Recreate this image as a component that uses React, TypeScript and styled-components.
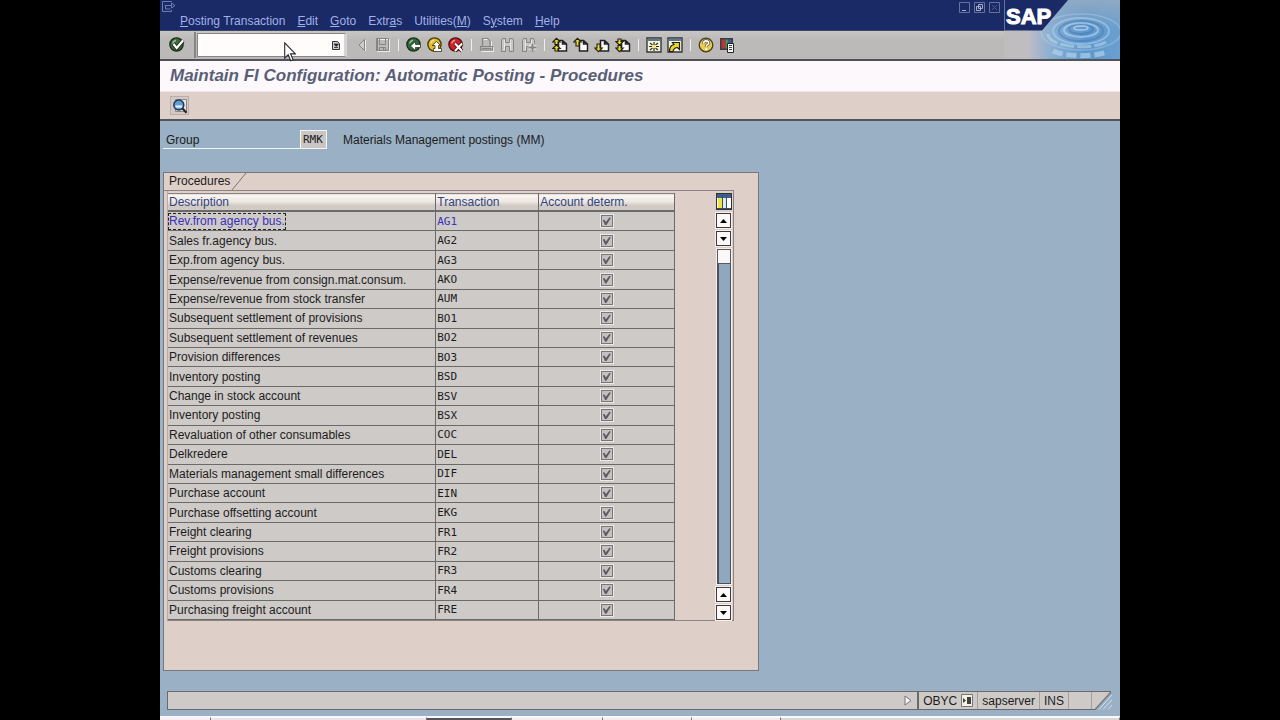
import React from "react";
import styled, { createGlobalStyle } from "styled-components";

const navy = "#192a66";
const grey = "#bfbdbc";
const beige = "#decfc8";
const blue = "#99b0c5";
const cell = "#cecac8";
const line = "#6b6a6a";
const sans = `"Liberation Sans", Arial, sans-serif`;
const mono = `"DejaVu Sans Mono", "Liberation Mono", monospace`;

const GlobalStyle = createGlobalStyle`
  * { box-sizing: border-box; }
  body { margin: 0; background: #000; font: 12px/16px ${sans}; color: #1c1c20; }
  button, input { font: inherit; color: inherit; }
`;

const Stage = styled.div`
  min-height: 100vh;
  padding: 0 12.5%;
  background: #000;
`;

const Window = styled.div`
  display: flex;
  flex-direction: column;
  min-height: 100vh;
  background: ${blue};
`;

/* ---------- header ---------- */

const Header = styled.header`
  display: flex;
  border-bottom: 2px solid #53525a;
  background: ${grey};
`;

const HeaderMain = styled.div`
  flex: 1;
  min-width: 0;
`;

const TitleRow = styled.div`
  display: flex;
  justify-content: space-between;
  height: 13px;
  padding: 1px 4px 0 2px;
  background: ${navy};
`;

const WindowButtons = styled.div`
  display: flex;
  gap: 4px;
`;

const PlainButton = styled.button`
  display: flex;
  align-items: center;
  justify-content: center;
  padding: 0;
  border: 0;
  background: none;
`;

const MenuBar = styled.nav`
  display: flex;
  gap: 12px;
  height: 18px;
  padding: 0 20px 1px;
  background: ${navy};
  border-bottom: 1px solid #3c4566;
`;

const MenuItem = styled.button`
  padding: 0;
  border: 0;
  background: none;
  color: #a3b1e6;
  line-height: 15px;
  white-space: nowrap;
`;

const Toolbar = styled.div`
  display: flex;
  align-items: center;
  height: 28px;
  background: linear-gradient(#c9c7c6, #bcbab9 30%, #bcbab9);
`;

const EnterSlot = styled.div`
  display: flex;
  justify-content: center;
  align-items: center;
  width: 36px;
  height: 26px;
  border-right: 2px solid #858486;
`;

const CommandField = styled.div`
  position: relative;
  display: flex;
  align-items: center;
  width: 150px;
  height: 24px;
  margin-left: 1px;
  padding-right: 3px;
  border: 1px solid #858486;
  border-right: 3px solid #d6d4d4;
  background: #fffcfb;
`;

const CommandInput = styled.input`
  flex: 1;
  min-width: 0;
  height: 20px;
  border: 0;
  padding: 0 4px;
  background: transparent;
  outline: 0;
`;

const Pointer = styled.svg`
  position: absolute;
  left: 86px;
  top: 8px;
`;

const Tools = styled.div`
  display: flex;
  align-items: center;
  margin-left: 6px;
`;

const ToolGroup = styled.div`
  display: flex;
  gap: 3px;
`;

const ToolButton = styled(PlainButton)`
  width: 18px;
  height: 18px;
`;

const Divider = styled.span`
  width: 1px;
  height: 12px;
  margin: 0 6px;
  background: #efeded;
`;

const Brand = styled.svg`
  flex: none;
  display: block;
`;

const PageTitle = styled.h1`
  margin: 0;
  padding: 0 10px;
  height: 30px;
  background: #fdf8fc;
  color: #586075;
  font: italic bold 17px/29px ${sans};
  white-space: nowrap;
`;

const ActionBar = styled.div`
  display: flex;
  align-items: center;
  height: 30px;
  padding: 0 10px;
  border-top: 1px solid #efe7e3;
  border-bottom: 2px solid #55565c;
  background: ${beige};
`;

const ActionButton = styled(PlainButton)`
  width: 19px;
  height: 19px;
  border: 1px solid #b9aeaa;
  background: #d3c9c5;
`;

/* ---------- work area ---------- */

const Work = styled.main`
  display: flex;
  flex-direction: column;
  flex: 1;
  padding: 9px 3px 6px;
`;

const GroupRow = styled.div`
  display: flex;
  align-items: flex-end;
  height: 19px;
`;

const GroupLabel = styled.label`
  width: 137px;
  height: 18px;
  padding: 1px 3px;
  border-bottom: 1px solid #f2f5f8;
`;

const GroupValue = styled.input`
  width: 27px;
  height: 19px;
  padding: 0 2px;
  border: 1px solid #f7f5f4;
  background: #c9c6c4;
  font: 11px/16px ${mono};
`;

const GroupText = styled.span`
  padding: 1px 16px 0;
  line-height: 17px;
`;

const Panel = styled.section`
  width: 62.5%;
  margin-top: 23px;
  padding-bottom: 49px;
  border: 1px solid #77777c;
  background: ${beige};
`;

const TabStrip = styled.div`
  display: flex;
  height: 18px;
  margin-right: 24px;
  border-bottom: 1px solid #8b8482;
`;

const Tab = styled.h2`
  margin: 0;
  padding-left: 5px;
  font: 12px/17px ${sans};
`;

const Frame = styled.div`
  display: flex;
  justify-content: space-between;
  margin: 0 24px 0 3px;
  padding: 2px 1px 0 0;
  border: solid #8b8482;
  border-width: 0 1px 1px 0;
  border-left: 1px solid #b9a9a2;
`;

const Table = styled.table`
  flex: 1;
  height: 427px;
  margin-right: 40px;
  border-collapse: collapse;
  table-layout: fixed;
  background: ${cell};
`;

const Head = styled.th<{ $width?: number }>`
  width: ${(p) => (p.$width ? `${p.$width}px` : "auto")};
  height: 17px;
  padding: 1px 1px 0;
  border-right: 1px solid ${line};
  border-bottom: 2px solid ${line};
  border-top: 1px solid #8b8482;
  background: linear-gradient(#fbf7f4, #eee7e2 45%, #cfc8c3 70%, #d2cbc6);
  color: #30457f;
  font-weight: normal;
  line-height: 15px;
  text-align: left;
`;

const Cell = styled.td<{ $kind?: "code" | "check" }>`
  padding: ${(p) => (p.$kind ? "0 1px" : "1px 1px 0")};
  border-right: 1px solid ${line};
  border-bottom: 1px solid ${line};
  font: ${(p) => (p.$kind === "code" ? `11px/15px ${mono}` : `12px/15px ${sans}`)};
  text-align: ${(p) => (p.$kind === "check" ? "center" : "left")};
  white-space: nowrap;
`;

const Row = styled.tr<{ $current?: boolean }>`
  color: ${(p) => (p.$current ? "#3a30b8" : "#1c1c20")};
`;

const FocusText = styled.span`
  display: inline-block;
  outline: 1px dashed #222;
`;

const Check = styled.input`
  appearance: none;
  display: block;
  width: 14px;
  height: 14px;
  margin: 0 auto;
  border: 1px solid #eceae9;
  background: #c4c1bf;
  box-shadow: inset 0 0 0 1px #77757a;
  &::after {
    content: "";
    display: block;
    width: 8px;
    height: 8px;
    margin: 2px;
    background: #5d5b60;
    clip-path: polygon(0 35%, 20% 30%, 40% 60%, 85% 0, 100% 12%, 45% 100%, 30% 100%);
  }
`;

const Scroller = styled.div`
  display: flex;
  flex-direction: column;
  align-items: center;
  gap: 3px;
  width: 17px;
`;

const ConfigButton = styled(PlainButton)`
  width: 16px;
  height: 17px;
  border: 1px solid #333;
`;

const ScrollButton = styled(PlainButton)`
  width: 15px;
  height: 15px;
  border: 1px solid #3c3c3e;
  outline: 1px solid #f4f0ee;
  background: #fbf8f7;
`;

const Track = styled.div`
  flex: 1;
  width: 14px;
  border: 1px solid #4b5058;
  border-left: 2px solid #4b5058;
  outline: 1px solid #f4f0ee;
  background: #8fa8bf;
`;

const Thumb = styled.div`
  height: 15px;
  margin: -1px -1px 0 -2px;
  border: 1px solid #5a5a5c;
  background: #fbf8f7;
`;

/* ---------- status ---------- */

const StatusBar = styled.footer`
  display: flex;
  align-items: stretch;
  height: 19px;
  margin: auto 4px 0;
`;

const StatusMain = styled.div`
  display: flex;
  flex: 1;
  border: 1px solid ${line};
  border-right: 0;
  background: ${cell};
`;

const Message = styled.div`
  display: flex;
  flex: 1;
  align-items: center;
  justify-content: flex-end;
  padding-right: 5px;
  border-right: 2px solid ${line};
`;

const StatusItem = styled.div<{ $min?: number }>`
  display: flex;
  align-items: center;
  gap: 4px;
  min-width: ${(p) => p.$min ?? 0}px;
  padding: 0 4px;
  border-right: 1px solid #a3a09f;
`;

const Taskbar = styled.div`
  display: flex;
  height: 4px;
  border-top: 1px solid #fbf7fa;
  background: #f6eff2;
`;

const Task = styled.span<{ $grow: number; $tone: string }>`
  flex: ${(p) => p.$grow} 1 0;
  border-right: 1px solid #77757a;
  border-top: 1px solid #fbf7fa;
  background: ${(p) => p.$tone};
`;

/* ---------- icons ---------- */

const Icon = ({ children, size = 16 }: { children: React.ReactNode; size?: number }) => (
  <svg width={size} height={size} viewBox={`0 0 ${size} ${size}`} aria-hidden="true">
    {children}
  </svg>
);

const Ball = ({ fill, dark }: { fill: string; dark: string }) => (
  <>
    <circle cx="7.5" cy="7.5" r="6.6" fill={fill} stroke={dark} strokeWidth="1.4" />
    <path d="M3.6 6.4A4.4 4.4 0 0 1 7 3.2" fill="none" stroke="#fff" strokeOpacity=".55" strokeWidth="1.4" />
  </>
);

const EnterIcon = () => (
  <Icon>
    <Ball fill="#3d6b3c" dark="#1d2b1d" />
    <path d="M4.500 7l3.200 4L14 3.500" fill="none" stroke="#1d2b1d" strokeWidth="4" />
    <path d="M4.500 7l3.200 4L14 3.500" fill="none" stroke="#fff" strokeWidth="2.200" />
  </Icon>
);
const BackIcon = () => (
  <Icon>
    <Ball fill="#2f6b38" dark="#1d2b1d" />
    <path d="M4.500 9l5-4.500v3H14.500v3h-5v3z" fill="#fff" stroke="#1d2b1d" strokeWidth=".7" />
  </Icon>
);
const ExitIcon = () => (
  <Icon>
    <Ball fill="#e3bb2b" dark="#4a3c0c" />
    <path d="M5 8.500L9.500 4.500l4 4h-2v3h3v3h-8v-3h1.500v-3z" fill="#fff" stroke="#3c3210" strokeWidth=".8" />
  </Icon>
);
const CancelIcon = () => (
  <Icon>
    <Ball fill="#cf2228" dark="#4b1012" />
    <path d="M7 6.500l7 7.500M14 6.500L7 14" stroke="#4b1012" strokeWidth="3.600" />
    <path d="M7 6.500l7 7.500M14 6.500L7 14" stroke="#fff" strokeWidth="2" />
  </Icon>
);
const LeftIcon = () => (
  <Icon>
    <path d="M10.500 2.500v11L5 8z" fill="#cfcdcc" stroke="#858384" />
    <path d="M11.500 3v11" stroke="#efeded" />
  </Icon>
);
const SaveIcon = () => (
  <Icon>
    <path d="M2.500 2.500h12v12h-12z" fill="none" stroke="#efeded" />
    <path d="M1.500 1.500h12v12h-12zM4.500 1.500v6h6v-6M4.500 13.500v-3h6v3M8.500 11v2M2.500 2v11" fill="none" stroke="#858384" />
  </Icon>
);
const PrintIcon = () => (
  <Icon>
    <path d="M4.500 2.500h6l2 2v6h2v4h-12" fill="none" stroke="#efeded" />
    <path d="M3.500 9.500v-8h5l2.500 2v6M1.500 9.500h12v3.500h-12zM3 11.500h9" fill="none" stroke="#858384" strokeWidth="1.200" />
  </Icon>
);
const Binoculars = ({ small }: { small?: boolean }) => (
  <g fill="#c9c7c6" stroke="#858384">
    <path d="M1.500 14.500v-11l1-2h3v4h4v-4h3l1 2v11h-4v-5h-4v5z" />
    <path d="M4.500 3v10M10.500 3v10" stroke="#e6e4e4" />
    {small && (
      <>
        <path d="M11.500 6.500v8M7.500 10.500h8" stroke="#efeded" strokeWidth="4" />
        <path d="M11.500 6.500v8M7.500 10.500h8" stroke="#858384" strokeWidth="2" />
      </>
    )}
  </g>
);
const FindIcon = () => <Icon><Binoculars /></Icon>;
const FindNextIcon = () => <Icon><Binoculars small /></Icon>;

const Sheet = () => (
  <path d="M6.500 3.500h4l4 3.500v7h-8z M10.500 3.500V7h4" fill="#fbfafa" stroke="#222226" strokeWidth="1.500" />
);
const Arrow = ({ d }: { d: string }) => (
  <path d={d} fill="#e8d92c" stroke="#1f1f0e" strokeWidth="1.100" />
);
const FirstPageIcon = () => (
  <Icon><Sheet /><Arrow d="M.8 5L4.500 1.300 8.200 5H6v2.500H3V5z" /><Arrow d="M.8 11.500l3.700-3.700 3.700 3.700H6V14H3v-2.500z" /></Icon>
);
const PrevPageIcon = () => (
  <Icon><Sheet /><Arrow d="M.8 5L4.500 1.300 8.200 5H6v4H3V5z" /></Icon>
);
const NextPageIcon = () => (
  <Icon><Sheet /><Arrow d="M.8 11H3V7h3v4h2.200l-3.700 3.700z" /></Icon>
);
const LastPageIcon = () => (
  <Icon><Sheet /><Arrow d="M.8 4.500H3V2h3v2.500h2.200L4.500 8.200z" /><Arrow d="M.8 11H3V8.500h3V11h2.200l-3.700 3.700z" /></Icon>
);
const Win = () => (
  <>
    <path d="M1 1h14v14H1z" fill="#f5f3d8" stroke="#33363c" strokeWidth="1.400" />
    <path d="M1.500 2h13v2h-13z" fill="#5d7890" />
  </>
);
const SessionIcon = () => (
  <Icon>
    <Win />
    <path d="M8 5v3M8 11v3M4 6l2.500 2M12 6L9.500 8M4 13l2.500-2M12 13l-2.500-2M3 9.500h3M10 9.500h3" stroke="#33331a" strokeWidth="1.200" />
    <path d="M7 8.500h2v2H7z" fill="#f2e63c" />
  </Icon>
);
const ShortcutIcon = () => (
  <Icon>
    <Win />
    <path d="M2.500 14.500c0-4.500 1.500-6.500 4.500-7L5.500 5.500h7v7l-2-2C8 10.500 6.500 11.500 6 14.500z" fill="#e8d92c" stroke="#1f1f0e" strokeWidth="1.200" />
  </Icon>
);
const HelpIcon = () => (
  <Icon>
    <circle cx="8" cy="8" r="6.800" fill="#e9cb52" stroke="#4a3f20" strokeWidth="1.300" />
    <path d="M5.500 6.500c0-3.500 5.200-3.500 5.200-.6 0 1.800-2.500 1.800-2.500 3.900" fill="none" stroke="#4a3f20" strokeWidth="3" />
    <path d="M5.500 6.500c0-3.500 5.200-3.500 5.200-.6 0 1.800-2.500 1.800-2.500 3.900M8.200 11.300v1.700" fill="none" stroke="#fff" strokeWidth="1.700" />
  </Icon>
);
const LayoutIcon = () => (
  <Icon>
    <path d="M1 1h13v12H1z" fill="#3a3d44" />
    <path d="M2.500 2.500h4v9h-4z" fill="#c0313a" />
    <path d="M6.500 2.500h3v9h-3z" fill="#3f9a4c" />
    <path d="M9.500 2.500h3v9h-3z" fill="#3656a8" />
    <path d="M8.500 6.500h6v9h-6z" fill="#f4f4f4" stroke="#26262a" />
    <path d="M10 8.500h3M10 10.500h3M10 12.500h3" stroke="#44464c" />
  </Icon>
);
const DetailIcon = () => (
  <Icon>
    <path d="M3.500 1.500h11v12h-11z" fill="#e8e6e6" stroke="#8b8988" />
    <circle cx="6.800" cy="7" r="5" fill="#5f9fdb" stroke="#26364c" strokeWidth="1.400" />
    <path d="M3.500 8.500h6.500" stroke="#e9f3fb" strokeWidth="2.200" />
    <path d="M10.500 10.500l4 4.200" stroke="#26262a" strokeWidth="2.200" />
  </Icon>
);
const HistoryIcon = () => (
  <Icon size={10}>
    <path d="M1.500 1.500h5l2 2v6h-7z" fill="#cfcdcc" stroke="#33343a" />
    <path d="M3 4h4.500L5.200 6.500zM3 7.500h4" fill="#26262a" stroke="#26262a" strokeWidth=".8" />
  </Icon>
);

const groups = [
  [
    ["Back one step", LeftIcon],
    ["Save", SaveIcon],
  ],
  [
    ["Back", BackIcon],
    ["Exit", ExitIcon],
    ["Cancel", CancelIcon],
  ],
  [
    ["Print", PrintIcon],
    ["Find", FindIcon],
    ["Find next", FindNextIcon],
  ],
  [
    ["First page", FirstPageIcon],
    ["Previous page", PrevPageIcon],
    ["Next page", NextPageIcon],
    ["Last page", LastPageIcon],
  ],
  [
    ["New session", SessionIcon],
    ["Create shortcut", ShortcutIcon],
  ],
  [
    ["Help", HelpIcon],
    ["Customize layout", LayoutIcon],
  ],
] as [string, React.FC][][];

const menus = [
  ["", "P", "osting Transaction"],
  ["", "E", "dit"],
  ["", "G", "oto"],
  ["Extr", "a", "s"],
  ["Utilities(", "M", ")"],
  ["S", "y", "stem"],
  ["", "H", "elp"],
];

const rows = [
  ["Rev.from agency bus.", "AG1"],
  ["Sales fr.agency bus.", "AG2"],
  ["Exp.from agency bus.", "AG3"],
  ["Expense/revenue from consign.mat.consum.", "AKO"],
  ["Expense/revenue from stock transfer", "AUM"],
  ["Subsequent settlement of provisions", "BO1"],
  ["Subsequent settlement of revenues", "BO2"],
  ["Provision differences", "BO3"],
  ["Inventory posting", "BSD"],
  ["Change in stock account", "BSV"],
  ["Inventory posting", "BSX"],
  ["Revaluation of other consumables", "COC"],
  ["Delkredere", "DEL"],
  ["Materials management small differences", "DIF"],
  ["Purchase account", "EIN"],
  ["Purchase offsetting account", "EKG"],
  ["Freight clearing", "FR1"],
  ["Freight provisions", "FR2"],
  ["Customs clearing", "FR3"],
  ["Customs provisions", "FR4"],
  ["Purchasing freight account", "FRE"],
];

const BrandArt = () => (
  <Brand width="116" height="59" viewBox="0 0 116 59" role="img" aria-label="SAP">
    <defs>
      <linearGradient id="water" x1="0" y1="0" x2="1" y2="0">
        <stop offset="0" stopColor="#bfbdbc" />
        <stop offset=".2" stopColor="#c0bdc2" />
        <stop offset=".42" stopColor="#86aed3" />
        <stop offset=".7" stopColor="#5f97cc" />
        <stop offset="1" stopColor="#6a9fd0" />
      </linearGradient>
      <linearGradient id="sky" x1="0" y1="0" x2="0" y2="1">
        <stop offset="0" stopColor="#8fa9c4" />
        <stop offset="1" stopColor="#8fa9c4" stopOpacity="0" />
      </linearGradient>
    </defs>
    <path d="M0 0h116v59H0z" fill="url(#water)" />
    <path d="M50 0h66v30H36z" fill="url(#sky)" />
    <g fill="none" stroke="#3f78b4">
      <ellipse cx="77" cy="29" rx="12" ry="5" strokeWidth="2" strokeOpacity=".5" />
      <ellipse cx="77" cy="31" rx="22" ry="10" strokeWidth="2" strokeOpacity=".45" />
    </g>
    <g fill="none" stroke="#b9d8f1">
      <ellipse cx="77" cy="28" rx="7" ry="2" strokeWidth="1.500" strokeOpacity=".8" />
      <ellipse cx="77" cy="30" rx="17" ry="7" strokeWidth="2" strokeOpacity=".6" />
      <ellipse cx="77" cy="31" rx="28" ry="13" strokeWidth="2" strokeOpacity=".5" />
      <ellipse cx="77" cy="32" rx="40" ry="18" strokeWidth="1.500" strokeOpacity=".35" />
      <path d="M49 51c10 5 36 7 54 1" strokeWidth="5" strokeOpacity=".6" strokeDasharray="10 4" />
      <path d="M44 34c0 14 46 16 58 8" strokeWidth="3" strokeOpacity=".55" strokeDasharray="14 3" />
    </g>
    <path d="M0 0h64L38 30.500H0z" fill={navy} />
    <path d="M.5 0v30" stroke="#66719c" />
    <text x="2" y="24" fill="#fff" stroke="#fff" strokeWidth="1" fontFamily="Liberation Sans, Arial, sans-serif" fontWeight="bold" fontSize="22">
      SAP
    </text>
  </Brand>
);

const Up = () => (
  <svg width="7" height="4" aria-hidden="true"><path d="M0 4L3.500 0 7 4z" /></svg>
);
const Down = () => (
  <svg width="7" height="4" aria-hidden="true"><path d="M0 0h7L3.500 4z" /></svg>
);

export default function App() {
  return (
    <Stage>
      <GlobalStyle />
      <Window>
        <Header>
          <HeaderMain>
            <TitleRow>
              <PlainButton aria-label="System menu">
                <svg width="14" height="12" viewBox="0 0 14 12" fill="none" stroke="#6f7db6">
                  <path d="M9.500 1V.5h-9v10h9V9M3.500 4v4h5M4 4.500h6M9.500 2l3.500 2.500L9.500 7z" />
                </svg>
              </PlainButton>
              <WindowButtons>
                {[
                  ["Minimize", "M3 8.500h4"],
                  ["Restore", "M4.500 2.500h4v4h-4zM2.500 4.500h4v4h-4z"],
                  ["Close", "M3 3l5 5M8 3l-5 5"],
                ].map(([name, d]) => (
                  <PlainButton key={name} aria-label={name}>
                    <svg width="11" height="11" viewBox="0 0 11 11" fill="none">
                      <path d="M.5.5h10v10H.5z" stroke="#66719c" />
                      <path d={d} stroke={name === "Close" ? "#4c5990" : "#a6aecb"} />
                    </svg>
                  </PlainButton>
                ))}
              </WindowButtons>
            </TitleRow>
            <MenuBar>
              {menus.map(([before, key, after]) => (
                <MenuItem key={before + key + after}>
                  {before}
                  <u>{key}</u>
                  {after}
                </MenuItem>
              ))}
            </MenuBar>
            <Toolbar>
              <EnterSlot>
                <ToolButton aria-label="Enter"><EnterIcon /></ToolButton>
              </EnterSlot>
              <CommandField>
                <CommandInput aria-label="Command" />
                <PlainButton aria-label="Command history"><HistoryIcon /></PlainButton>
                <Pointer width="12" height="20" viewBox="0 0 12 20">
                  <path d="M.7.800v15.400l3.500-3.400 2.500 5.900 2.400-1-2.500-5.800h4.800z" fill="#fff" stroke="#2a2a2e" strokeWidth="1.100" />
                </Pointer>
              </CommandField>
              <Tools>
                {groups.map((group, i) => (
                  <React.Fragment key={i}>
                    {i > 0 && <Divider />}
                    <ToolGroup>
                      {group.map(([name, Glyph]) => (
                        <ToolButton key={name} aria-label={name}><Glyph /></ToolButton>
                      ))}
                    </ToolGroup>
                  </React.Fragment>
                ))}
              </Tools>
            </Toolbar>
          </HeaderMain>
          <BrandArt />
        </Header>
        <PageTitle>Maintain FI Configuration: Automatic Posting - Procedures</PageTitle>
        <ActionBar>
          <ActionButton aria-label="Choose detail"><DetailIcon /></ActionButton>
        </ActionBar>

        <Work>
          <GroupRow>
            <GroupLabel htmlFor="group">Group</GroupLabel>
            <GroupValue id="group" defaultValue="RMK" readOnly />
            <GroupText>Materials Management postings (MM)</GroupText>
          </GroupRow>

          <Panel>
            <TabStrip>
              <Tab>Procedures</Tab>
              <svg width="18" height="17" aria-hidden="true">
                <path d="M2 17L16 0" stroke="#77757a" />
              </svg>
            </TabStrip>
            <Frame>
              <Table>
                <thead>
                  <tr>
                    <Head>Description</Head>
                    <Head $width={103}>Transaction</Head>
                    <Head $width={136}>Account determ.</Head>
                  </tr>
                </thead>
                <tbody>
                  {rows.map(([text, code], i) => (
                    <Row key={code} $current={i === 0}>
                      <Cell>{i === 0 ? <FocusText>{text}</FocusText> : text}</Cell>
                      <Cell $kind="code">{code}</Cell>
                      <Cell $kind="check">
                        <Check type="checkbox" defaultChecked disabled aria-label={`Account determination ${code}`} />
                      </Cell>
                    </Row>
                  ))}
                </tbody>
              </Table>
              <Scroller>
                <ConfigButton aria-label="Configure columns">
                  <svg width="14" height="15" aria-hidden="true">
                    <path d="M0 0h14v15H0z" fill="#fff" />
                    <path d="M0 0h14v4H0z" fill="#3c5f8c" />
                    <path d="M1 4h4v10H1z" fill="#f0e443" />
                    <path d="M6 4h3v10H6z" fill="#dfe9f2" />
                    <path d="M5.500 1v13M9.500 1v13M0 14.500h14" stroke="#33506f" />
                  </svg>
                </ConfigButton>
                <ScrollButton aria-label="First line"><Up /></ScrollButton>
                <ScrollButton aria-label="Previous line"><Down /></ScrollButton>
                <Track><Thumb /></Track>
                <ScrollButton aria-label="Next line"><Up /></ScrollButton>
                <ScrollButton aria-label="Last line"><Down /></ScrollButton>
              </Scroller>
            </Frame>
          </Panel>

          <StatusBar>
            <StatusMain>
              <Message>
                <svg width="8" height="11" aria-hidden="true">
                  <path d="M1 1l6 4.500L1 10z" fill="#f7f5f4" stroke="#77757a" />
                </svg>
              </Message>
              <StatusItem>
                OBYC
                <PlainButton aria-label="System information">
                  <svg width="12" height="13" aria-hidden="true">
                    <path d="M.5.500h11v12H.5z" fill="#f4f0e6" stroke="#77757a" />
                    <path d="M2 4l3 2.500L2 9zM6 3h4v7H6z" fill="#44423c" />
                  </svg>
                </PlainButton>
              </StatusItem>
              <StatusItem>sapserver</StatusItem>
              <StatusItem>INS</StatusItem>
              <StatusItem $min={23} />
            </StatusMain>
            <svg width="21" height="19" aria-hidden="true">
              <path d="M0 0h19L3 19H0z" fill={cell} />
              <path d="M0 .5h19M0 18.500h4" stroke={line} />
              <path d="M19 1L3 18.500" stroke="#77757a" strokeWidth="1.200" />
              <path d="M20 4L7 18.500M20 9l-9 9.500M20 14l-4 4.500" stroke="#d5e0ea" />
            </svg>
          </StatusBar>
        </Work>
        <Taskbar>
          <Task $grow={50} $tone="#f8eef4" />
          <Task $grow={217} $tone="#e9e4e6" />
          <Task $grow={85} $tone="#55545a" />
          <Task $grow={90} $tone="#f3ecee" />
          <Task $grow={89} $tone="#f3ecee" />
          <Task $grow={89} $tone="#f3ecee" />
          <Task $grow={340} $tone="#d9d6d6" />
        </Taskbar>
      </Window>
    </Stage>
  );
}
